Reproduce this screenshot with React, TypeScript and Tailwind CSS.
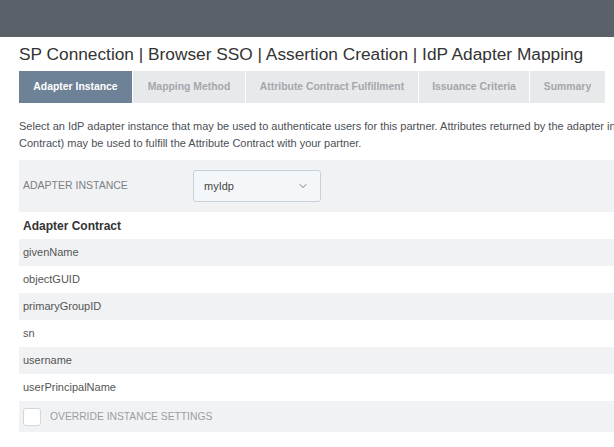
import { ChevronDown } from 'lucide-react';

const tabs = [
  { label: 'Adapter Instance', w: 'w-[113px]' },
  { label: 'Mapping Method', w: 'w-[112px]' },
  { label: 'Attribute Contract Fulfillment', w: 'w-[172px]' },
  { label: 'Issuance Criteria', w: 'w-[110px]' },
  { label: 'Summary', w: 'w-[75px]' },
];

const contract = ['givenName', 'objectGUID', 'primaryGroupID', 'sn', 'username', 'userPrincipalName'];

export default function App() {
  return (
    <div
      className="h-[447px] w-[614px] overflow-hidden bg-white text-[#333]"
      style={{ fontFamily: '"Liberation Sans", Arial, sans-serif' }}
    >
      <div className="h-[37px] bg-[#5b6168]" />

      <div className="pl-[19px]">
        <h1 className="flex h-[34px] items-center whitespace-nowrap pt-[1px] text-[17.3px] font-normal text-[#333]">
          SP Connection | Browser SSO | Assertion Creation | IdP Adapter Mapping
        </h1>

        <div className="flex h-[32px] gap-px">
          {tabs.map((t, i) => (
            <div
              key={t.label}
              className={
                i === 0
                  ? `flex ${t.w} items-center justify-center whitespace-nowrap bg-[#6e8297] text-[10.4px] font-bold text-white`
                  : `flex ${t.w} items-center justify-center whitespace-nowrap bg-[#e8e9eb] text-[10.4px] font-bold text-[#a3a7ab]`
              }
            >
              {t.label}
            </div>
          ))}
        </div>

        <p className="mt-[15px] mb-[8px] whitespace-nowrap text-[11px] leading-[17px] text-[#4b5056]">
          Select an IdP adapter instance that may be used to authenticate users for this partner. Attributes returned by the adapter instance (the Adapter
          <br />
          Contract) may be used to fulfill the Attribute Contract with your partner.
        </p>

        <div className="flex h-[52px] items-center bg-[#f1f2f4] pl-[4px]">
          <span className="w-[170px] text-[10.5px] text-[#7b8087]">ADAPTER INSTANCE</span>
          <div className="flex h-[32px] w-[128px] items-center justify-between rounded-[3px] border border-[#c9d1d8] bg-[#f4f7f9] pl-[10px] pr-[11px] text-[11px] text-[#444]">
            <span>myIdp</span>
            <ChevronDown size={12} strokeWidth={1.5} className="text-[#555]" />
          </div>
        </div>

        <div className="flex h-[27px] items-center pl-[4px] text-[12px] font-bold text-[#333]">
          Adapter Contract
        </div>

        {contract.map((c, i) => (
          <div
            key={c}
            className={
              i % 2 === 0
                ? 'flex h-[27px] items-center bg-[#f1f2f4] pl-[4px] text-[11px] text-[#555]'
                : 'flex h-[27px] items-center bg-white pl-[4px] text-[11px] text-[#555]'
            }
          >
            {c}
          </div>
        ))}

        <div className="flex h-[31px] items-center gap-[9px] bg-[#f1f2f4] pl-[4px]">
          <span className="h-[18px] w-[18px] rounded-[3px] border border-[#d3d6da] bg-white" />
          <span className="text-[10.3px] text-[#9a9ea3]">OVERRIDE INSTANCE SETTINGS</span>
        </div>
      </div>
    </div>
  );
}
